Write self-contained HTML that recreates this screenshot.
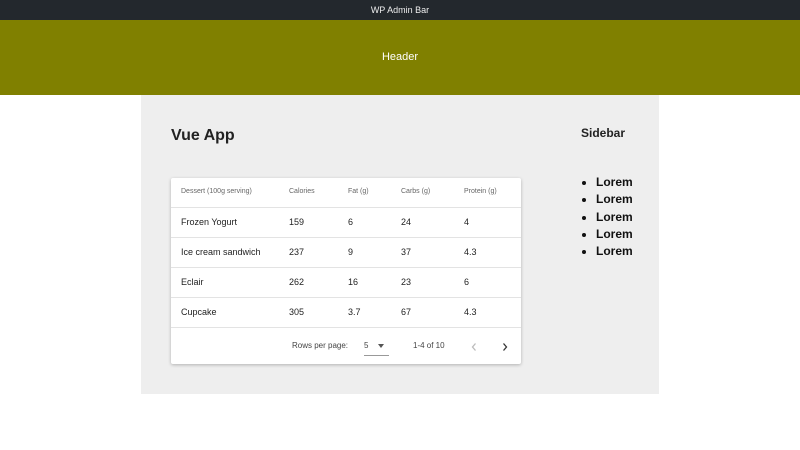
<!DOCTYPE html>
<html><head><style>
*{margin:0;padding:0;box-sizing:border-box}
body{width:800px;height:450px;background:#fff;font-family:"Liberation Sans",sans-serif;position:relative;overflow:hidden}
.bar{position:absolute;left:0;top:0;width:800px;height:20px;background:#23282d;color:#eee;font-size:9px;text-align:center;line-height:20px}
.hdr{position:absolute;left:0;top:20px;width:800px;height:75px;background:#808000;color:#fff;font-size:11px;text-align:center;line-height:74px}
.main{position:absolute;left:141px;top:95px;width:518px;height:299px;background:#eeeeee}
h1{position:absolute;left:171px;top:127px;font-size:16px;font-weight:bold;color:#222}
h2{position:absolute;left:581px;top:126px;font-size:12px;font-weight:bold;color:#222}
ul{position:absolute;left:596px;top:174px;font-size:12px;font-weight:bold;color:#111;line-height:17.3px}
.card{position:absolute;left:171px;top:178px;width:350px;height:186px;background:#fff;border-radius:2px;box-shadow:0 1px 3px rgba(0,0,0,.25)}
.row{position:absolute;left:0;width:350px;border-bottom:1px solid #e3e3e3;font-size:9px;color:#222}
.row span{position:absolute}
.h{font-size:7px;color:#666}
.f{position:absolute;top:158px;font-size:8px;color:#444}
</style></head><body>
<div class="bar">WP Admin Bar</div>
<div class="hdr">Header</div>
<div class="main"></div>
<h1>Vue App</h1>
<h2>Sidebar</h2>
<ul><li>Lorem</li><li>Lorem</li><li>Lorem</li><li>Lorem</li><li>Lorem</li></ul>
<div class="card">
<div class="row h" style="top:0;height:30px"><span style="left:10px;top:10px">Dessert (100g serving)</span><span style="left:118px;top:10px">Calories</span><span style="left:177px;top:10px">Fat (g)</span><span style="left:230px;top:10px">Carbs (g)</span><span style="left:293px;top:10px">Protein (g)</span></div>
<div class="row" style="top:30px;height:30px"><span style="left:10px;top:9px">Frozen Yogurt</span><span style="left:118px;top:9px">159</span><span style="left:177px;top:9px">6</span><span style="left:230px;top:9px">24</span><span style="left:293px;top:9px">4</span></div>
<div class="row" style="top:60px;height:30px"><span style="left:10px;top:9px">Ice cream sandwich</span><span style="left:118px;top:9px">237</span><span style="left:177px;top:9px">9</span><span style="left:230px;top:9px">37</span><span style="left:293px;top:9px">4.3</span></div>
<div class="row" style="top:90px;height:30px"><span style="left:10px;top:9px">Eclair</span><span style="left:118px;top:9px">262</span><span style="left:177px;top:9px">16</span><span style="left:230px;top:9px">23</span><span style="left:293px;top:9px">6</span></div>
<div class="row" style="top:120px;height:30px"><span style="left:10px;top:9px">Cupcake</span><span style="left:118px;top:9px">305</span><span style="left:177px;top:9px">3.7</span><span style="left:230px;top:9px">67</span><span style="left:293px;top:9px">4.3</span></div>
<div class="f" style="left:121px;top:163px">Rows per page:</div>
<div class="f" style="left:193px;top:163px">5</div>
<div style="position:absolute;left:207px;top:166px;border:3px solid transparent;border-top:4px solid #555"></div>
<div style="position:absolute;left:193px;top:177px;width:25px;border-top:1px solid #999"></div>
<div class="f" style="left:242px;top:163px">1-4 of 10</div>
<svg style="position:absolute;left:299px;top:164px" width="8" height="10" viewBox="0 0 8 10"><path d="M5.5 1.5 L2.5 5 L5.5 8.5" fill="none" stroke="#bbb" stroke-width="1.3"/></svg>
<svg style="position:absolute;left:330px;top:164px" width="8" height="10" viewBox="0 0 8 10"><path d="M2.5 1.5 L5.5 5 L2.5 8.5" fill="none" stroke="#333" stroke-width="1.3"/></svg>
</div>
</body></html>
